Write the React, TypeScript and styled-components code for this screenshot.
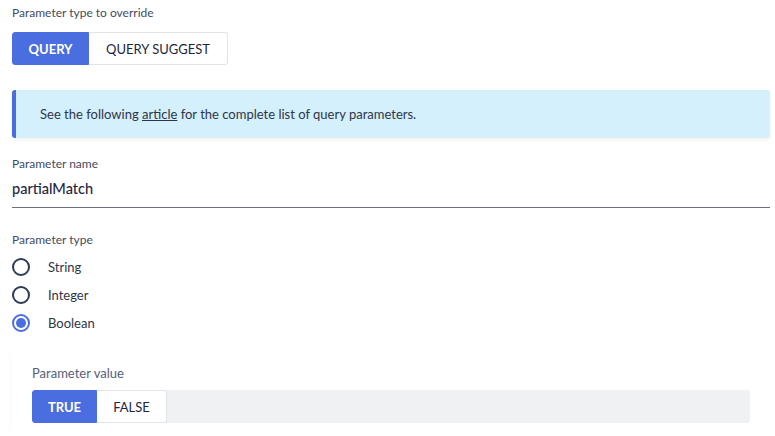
import React, { useState } from "react";
import styled, { createGlobalStyle } from "styled-components";

const GlobalStyle = createGlobalStyle`
  body {
    margin: 0;
    background: #ffffff;
    font-family: Lato, "Liberation Sans", sans-serif;
    color: #1f2540;
  }
`;

const Page = styled.div`
  width: 775px;
  height: 436px;
  box-sizing: border-box;
  padding: 5px 5px 0 12px;
  display: flex;
  flex-direction: column;
  overflow: hidden;
`;

const Label = styled.div<{ $top?: number; $large?: boolean }>`
  margin-top: ${(p) => p.$top ?? 0}px;
  font-size: ${(p) => (p.$large ? 13 : 12)}px;
  line-height: 16px;
  color: ${(p) => (p.$large ? "#55607c" : "#444b60")};
`;

const ButtonGroup = styled.div<{ $top?: number; $fill?: boolean }>`
  margin-top: ${(p) => p.$top ?? 0}px;
  display: flex;
  height: 33px;
  background: ${(p) => (p.$fill ? "#f0f1f3" : "transparent")};
  border-radius: 3px;
`;

const SegButton = styled.button<{ $active?: boolean; $w: number }>`
  width: ${(p) => p.$w}px;
  height: 33px;
  box-sizing: border-box;
  border: 1px solid ${(p) => (p.$active ? "#4a6ee0" : "#e3e4e8")};
  background: ${(p) => (p.$active ? "#4a6ee0" : "#ffffff")};
  color: ${(p) => (p.$active ? "#ffffff" : "#1f2540")};
  font-family: Lato, "Liberation Sans", sans-serif;
  font-size: 13px;
  font-weight: ${(p) => (p.$active ? 700 : 400)};
  padding: 0;
  cursor: pointer;
  &:first-child {
    border-radius: 3px 0 0 3px;
  }
  &:last-child {
    border-radius: 0 3px 3px 0;
    border-left: none;
  }
`;

const InfoBox = styled.div`
  margin-top: 25px;
  height: 48px;
  box-sizing: border-box;
  display: flex;
  align-items: center;
  padding-left: 24px;
  background: #d3f0fc;
  border-left: 4px solid #4a6ee0;
  border-radius: 3px;
  box-shadow: 0 2px 4px rgba(0, 0, 0, 0.06);
  font-size: 13px;
  color: #2f3548;
`;

const Link = styled.a`
  color: inherit;
  text-decoration: underline;
`;

const NameInput = styled.div`
  margin-top: 7px;
  font-size: 14.5px;
  font-weight: 500;
  line-height: 20px;
  color: #1f2540;
  padding-bottom: 8px;
  border-bottom: 1.5px solid #6b7082;
`;

const RadioList = styled.div`
  margin-top: 5px;
  display: flex;
  flex-direction: column;
`;

const RadioRow = styled.label`
  display: flex;
  align-items: center;
  height: 28px;
  gap: 18px;
  font-size: 13px;
  color: #2f3548;
  cursor: pointer;
`;

const RadioCircle = styled.span<{ $checked?: boolean }>`
  width: 18px;
  height: 18px;
  box-sizing: border-box;
  border-radius: 50%;
  border: 2px solid ${(p) => (p.$checked ? "#4a6ee0" : "#2b3a56")};
  display: flex;
  align-items: center;
  justify-content: center;
  &::after {
    content: "";
    width: 10px;
    height: 10px;
    border-radius: 50%;
    background: ${(p) => (p.$checked ? "#4a6ee0" : "transparent")};
  }
`;

const ValuePanel = styled.div`
  margin-top: 9px;
  flex: 1;
  padding: 19px 20px 0 20px;
  box-shadow: -6px 0 8px -6px rgba(0, 0, 0, 0.03);
`;

const types = ["String", "Integer", "Boolean"];

const App: React.FC = () => {
  const [paramKind, setParamKind] = useState("QUERY");
  const [paramType, setParamType] = useState("Boolean");
  const [value, setValue] = useState(true);

  return (
    <>
      <GlobalStyle />
      <Page>
        <Label>Parameter type to override</Label>
        <ButtonGroup $top={11}>
          <SegButton $w={77} $active={paramKind === "QUERY"} onClick={() => setParamKind("QUERY")}>
            QUERY
          </SegButton>
          <SegButton
            $w={139}
            $active={paramKind === "QUERY SUGGEST"}
            onClick={() => setParamKind("QUERY SUGGEST")}
          >
            QUERY SUGGEST
          </SegButton>
        </ButtonGroup>

        <InfoBox>
          <span>
            See the following <Link>article</Link> for the complete list of query parameters.
          </span>
        </InfoBox>

        <Label $top={18}>Parameter name</Label>
        <NameInput>partialMatch</NameInput>

        <Label $top={24}>Parameter type</Label>
        <RadioList>
          {types.map((t) => (
            <RadioRow key={t} onClick={() => setParamType(t)}>
              <RadioCircle $checked={paramType === t} />
              {t}
            </RadioRow>
          ))}
        </RadioList>

        <ValuePanel>
          <Label $large>Parameter value</Label>
          <ButtonGroup $top={9} $fill>
            <SegButton $w={65} $active={value} onClick={() => setValue(true)}>
              TRUE
            </SegButton>
            <SegButton $w={70} $active={!value} onClick={() => setValue(false)}>
              FALSE
            </SegButton>
          </ButtonGroup>
        </ValuePanel>
      </Page>
    </>
  );
};

export default App;
